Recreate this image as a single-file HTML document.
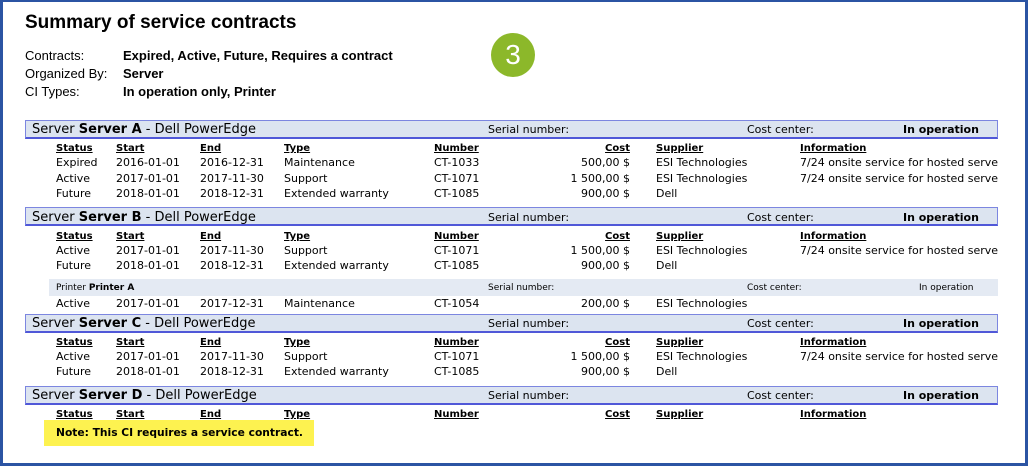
<!DOCTYPE html>
<html><head><meta charset="utf-8"><style>
*{margin:0;padding:0;box-sizing:border-box}
body{width:1028px;height:466px;overflow:hidden;background:#fff;position:relative;font-family:"DejaVu Sans","Liberation Sans",sans-serif;color:#000}
#frame{position:absolute;left:0;top:0;width:1028px;height:466px;border:3px solid #2b54a3;border-top-width:2px}
.a{position:absolute;white-space:nowrap;height:16px;line-height:16px;font-size:11px}
.ar{font-family:"Liberation Sans",Arial,sans-serif;font-size:13px}
.h{font-weight:bold;text-decoration:underline;font-size:10px}
.bar{position:absolute;left:25px;width:973px;height:19px;background:#dce4f0;border:1px solid #7c86e0;border-bottom:2px solid #5058d8}
.pbar{position:absolute;left:49px;width:949px;height:17px;background:#e4eaf3}
.r{text-align:right;width:100px}
#clip{position:absolute;left:0;top:0;width:998px;height:466px;overflow:hidden}
#inner{position:absolute;left:0;top:1px;width:998px;height:466px}
</style></head><body>
<div id="frame"></div>
<div class="a ar" style="left:25px;top:12px;font-size:19px;font-weight:bold;height:22px;line-height:22px">Summary of service contracts</div>
<div class="a ar" style="left:25px;top:48px">Contracts:</div><div class="a ar" style="left:123px;top:48px;font-weight:bold">Expired, Active, Future, Requires a contract</div>
<div class="a ar" style="left:25px;top:66px">Organized By:</div><div class="a ar" style="left:123px;top:66px;font-weight:bold">Server</div>
<div class="a ar" style="left:25px;top:84px">CI Types:</div><div class="a ar" style="left:123px;top:84px;font-weight:bold">In operation only, Printer</div>
<div style="position:absolute;left:491px;top:33px;width:44px;height:44px;border-radius:50%;background:#8cb82a;color:#fff;font:28px/44px 'Liberation Sans',sans-serif;text-align:center">3</div>

<div id="clip"><div id="inner">
<!-- Server A -->
<div class="bar" style="top:119px"></div>
<div class="a" style="left:32px;top:121px;font-size:13px">Server <b>Server A</b> - Dell PowerEdge</div>
<div class="a" style="left:488px;top:121px">Serial number:</div>
<div class="a" style="left:747px;top:121px">Cost center:</div>
<div class="a" style="left:903px;top:121px;font-weight:bold">In operation</div>
<div class="a h" style="left:56px;top:140px">Status</div><div class="a h" style="left:116px;top:140px">Start</div><div class="a h" style="left:200px;top:140px">End</div><div class="a h" style="left:284px;top:140px">Type</div><div class="a h" style="left:434px;top:140px">Number</div><div class="a h r" style="left:530px;top:140px">Cost</div><div class="a h" style="left:656px;top:140px">Supplier</div><div class="a h" style="left:800px;top:140px">Information</div>
<div class="a" style="left:56px;top:154px">Expired</div><div class="a" style="left:116px;top:154px">2016-01-01</div><div class="a" style="left:200px;top:154px">2016-12-31</div><div class="a" style="left:284px;top:154px">Maintenance</div><div class="a" style="left:434px;top:154px">CT-1033</div><div class="a r" style="left:530px;top:154px">500,00 $</div><div class="a" style="left:656px;top:154px">ESI Technologies</div><div class="a" style="left:800px;top:154px">7/24 onsite service for hosted servers</div>
<div class="a" style="left:56px;top:170px">Active</div><div class="a" style="left:116px;top:170px">2017-01-01</div><div class="a" style="left:200px;top:170px">2017-11-30</div><div class="a" style="left:284px;top:170px">Support</div><div class="a" style="left:434px;top:170px">CT-1071</div><div class="a r" style="left:530px;top:170px">1 500,00 $</div><div class="a" style="left:656px;top:170px">ESI Technologies</div><div class="a" style="left:800px;top:170px">7/24 onsite service for hosted servers</div>
<div class="a" style="left:56px;top:185px">Future</div><div class="a" style="left:116px;top:185px">2018-01-01</div><div class="a" style="left:200px;top:185px">2018-12-31</div><div class="a" style="left:284px;top:185px">Extended warranty</div><div class="a" style="left:434px;top:185px">CT-1085</div><div class="a r" style="left:530px;top:185px">900,00 $</div><div class="a" style="left:656px;top:185px">Dell</div>

<!-- Server B -->
<div class="bar" style="top:206px"></div>
<div class="a" style="left:32px;top:209px;font-size:13px">Server <b>Server B</b> - Dell PowerEdge</div>
<div class="a" style="left:488px;top:209px">Serial number:</div>
<div class="a" style="left:747px;top:209px">Cost center:</div>
<div class="a" style="left:903px;top:209px;font-weight:bold">In operation</div>
<div class="a h" style="left:56px;top:228px">Status</div><div class="a h" style="left:116px;top:228px">Start</div><div class="a h" style="left:200px;top:228px">End</div><div class="a h" style="left:284px;top:228px">Type</div><div class="a h" style="left:434px;top:228px">Number</div><div class="a h r" style="left:530px;top:228px">Cost</div><div class="a h" style="left:656px;top:228px">Supplier</div><div class="a h" style="left:800px;top:228px">Information</div>
<div class="a" style="left:56px;top:242px">Active</div><div class="a" style="left:116px;top:242px">2017-01-01</div><div class="a" style="left:200px;top:242px">2017-11-30</div><div class="a" style="left:284px;top:242px">Support</div><div class="a" style="left:434px;top:242px">CT-1071</div><div class="a r" style="left:530px;top:242px">1 500,00 $</div><div class="a" style="left:656px;top:242px">ESI Technologies</div><div class="a" style="left:800px;top:242px">7/24 onsite service for hosted servers</div>
<div class="a" style="left:56px;top:257px">Future</div><div class="a" style="left:116px;top:257px">2018-01-01</div><div class="a" style="left:200px;top:257px">2018-12-31</div><div class="a" style="left:284px;top:257px">Extended warranty</div><div class="a" style="left:434px;top:257px">CT-1085</div><div class="a r" style="left:530px;top:257px">900,00 $</div><div class="a" style="left:656px;top:257px">Dell</div>

<div class="pbar" style="top:278px"></div>
<div class="a" style="left:56px;top:279px;font-size:9px">Printer <b>Printer A</b></div>
<div class="a" style="left:488px;top:279px;font-size:9px">Serial number:</div>
<div class="a" style="left:747px;top:279px;font-size:9px">Cost center:</div>
<div class="a" style="left:919px;top:279px;font-size:9px">In operation</div>
<div class="a" style="left:56px;top:295px">Active</div><div class="a" style="left:116px;top:295px">2017-01-01</div><div class="a" style="left:200px;top:295px">2017-12-31</div><div class="a" style="left:284px;top:295px">Maintenance</div><div class="a" style="left:434px;top:295px">CT-1054</div><div class="a r" style="left:530px;top:295px">200,00 $</div><div class="a" style="left:656px;top:295px">ESI Technologies</div>

<!-- Server C -->
<div class="bar" style="top:313px"></div>
<div class="a" style="left:32px;top:315px;font-size:13px">Server <b>Server C</b> - Dell PowerEdge</div>
<div class="a" style="left:488px;top:315px">Serial number:</div>
<div class="a" style="left:747px;top:315px">Cost center:</div>
<div class="a" style="left:903px;top:315px;font-weight:bold">In operation</div>
<div class="a h" style="left:56px;top:334px">Status</div><div class="a h" style="left:116px;top:334px">Start</div><div class="a h" style="left:200px;top:334px">End</div><div class="a h" style="left:284px;top:334px">Type</div><div class="a h" style="left:434px;top:334px">Number</div><div class="a h r" style="left:530px;top:334px">Cost</div><div class="a h" style="left:656px;top:334px">Supplier</div><div class="a h" style="left:800px;top:334px">Information</div>
<div class="a" style="left:56px;top:348px">Active</div><div class="a" style="left:116px;top:348px">2017-01-01</div><div class="a" style="left:200px;top:348px">2017-11-30</div><div class="a" style="left:284px;top:348px">Support</div><div class="a" style="left:434px;top:348px">CT-1071</div><div class="a r" style="left:530px;top:348px">1 500,00 $</div><div class="a" style="left:656px;top:348px">ESI Technologies</div><div class="a" style="left:800px;top:348px">7/24 onsite service for hosted servers</div>
<div class="a" style="left:56px;top:363px">Future</div><div class="a" style="left:116px;top:363px">2018-01-01</div><div class="a" style="left:200px;top:363px">2018-12-31</div><div class="a" style="left:284px;top:363px">Extended warranty</div><div class="a" style="left:434px;top:363px">CT-1085</div><div class="a r" style="left:530px;top:363px">900,00 $</div><div class="a" style="left:656px;top:363px">Dell</div>

<!-- Server D -->
<div class="bar" style="top:385px"></div>
<div class="a" style="left:32px;top:387px;font-size:13px">Server <b>Server D</b> - Dell PowerEdge</div>
<div class="a" style="left:488px;top:387px">Serial number:</div>
<div class="a" style="left:747px;top:387px">Cost center:</div>
<div class="a" style="left:903px;top:387px;font-weight:bold">In operation</div>
<div class="a h" style="left:56px;top:406px">Status</div><div class="a h" style="left:116px;top:406px">Start</div><div class="a h" style="left:200px;top:406px">End</div><div class="a h" style="left:284px;top:406px">Type</div><div class="a h" style="left:434px;top:406px">Number</div><div class="a h r" style="left:530px;top:406px">Cost</div><div class="a h" style="left:656px;top:406px">Supplier</div><div class="a h" style="left:800px;top:406px">Information</div>
<div style="position:absolute;left:44px;top:419px;width:270px;height:26px;background:#fdf250"></div>
<div class="a" style="left:56px;top:424px;font-weight:bold;font-size:10.7px">Note: This CI requires a service contract.</div>
</div></div>
</body></html>
